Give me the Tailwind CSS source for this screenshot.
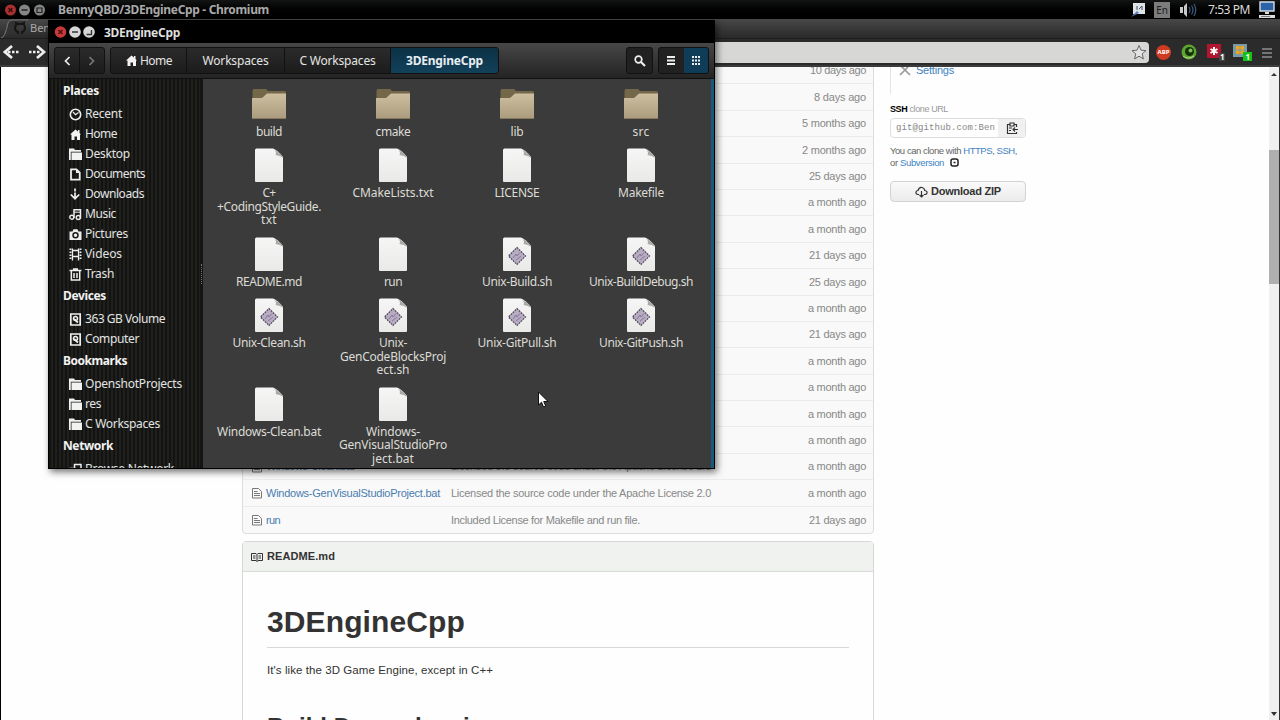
<!DOCTYPE html>
<html lang="en">
<head>
  <meta charset="UTF-8" />
  <meta name="viewport" content="width=device-width, initial-scale=1" />
  <title>BennyQBD/3DEngineCpp</title>
  <script src="https://cdn.jsdelivr.net/npm/@tailwindcss/browser@4"></script>
</head>
<body class="w-[1280px] h-[720px] overflow-hidden relative bg-[#fdfefd] font-['Noto_Sans','Open_Sans',sans-serif] whitespace-nowrap">

  <!-- icon sprites -->
  <svg class="absolute w-0 h-0">
    <symbol id="i-recent" viewBox="0 0 13 13"><circle cx="6.5" cy="6.5" r="5.2" fill="none" stroke="#eee" stroke-width="1.6"/><path d="M4 4l2.5 2.7L9.5 4.5" fill="none" stroke="#eee" stroke-width="1.2"/></symbol>
    <symbol id="i-home" viewBox="0 0 13 13"><path d="M6.5 1.5L1 6.5h1.5V12h3V8.5h2.5V12h3V6.5H12L10.5 5V2H9v1.5z" fill="#f2f2f2"/></symbol>
    <symbol id="i-folder" viewBox="0 0 13 13"><path d="M0 0.500h5l1 1.500h6v1.800H1.800V12H0zM2.500 4.500H13V12H2.500z" fill="#f2f2f2"/></symbol>
    <symbol id="i-doc" viewBox="0 0 13 13"><path d="M2 1.300h5.500l3.200 3.200v7.200H2z" fill="none" stroke="#eee" stroke-width="1.8"/><path d="M7 1v4h4z" fill="#eee"/></symbol>
    <symbol id="i-down" viewBox="0 0 13 13"><path d="M6 0.500v3M6 4.500v6M1.800 6.500L6 10.700l4.200-4.200" fill="none" stroke="#eee" stroke-width="1.7"/></symbol>
    <symbol id="i-music" viewBox="0 0 13 13"><path d="M5 10V1.800h6.500v9" fill="none" stroke="#eee" stroke-width="1.5"/><path d="M5 4.200h6.500" stroke="#eee"/><circle cx="2.800" cy="9.200" r="2" fill="none" stroke="#eee" stroke-width="1.4"/><circle cx="9.300" cy="9.500" r="2" fill="none" stroke="#eee" stroke-width="1.4"/></symbol>
    <symbol id="i-camera" viewBox="0 0 13 13"><path d="M0.500 3.500h3l1-2.300h4l1 2.300h3v8.500h-12z" fill="#eee"/><circle cx="6.500" cy="7.200" r="2.5" fill="#eee" stroke="#1a1a1a" stroke-width="1.5"/></symbol>
    <symbol id="i-video" viewBox="0 0 13 13"><path d="M3.500 0.500v12M9.500 0.500v12M3.500 2.500h6M3.500 8.500h6" stroke="#eee" stroke-width="1.300"/><path d="M1.500 0.500v12M11.500 0.500v12" stroke="#eee" stroke-width="2" stroke-dasharray="1.500 1.500"/></symbol>
    <symbol id="i-trash" viewBox="0 0 13 13"><path d="M0.500 2.500h12M4 1h5M2.300 3v9h8.400V3M5 5v5M8 5v5" fill="none" stroke="#eee" stroke-width="1.500"/></symbol>
    <symbol id="i-disk" viewBox="0 0 13 13"><path d="M1.800 1h9.400v11H1.800z" fill="none" stroke="#eee" stroke-width="1.700"/><circle cx="6.500" cy="5.500" r="2" fill="none" stroke="#eee" stroke-width="1.500"/><path d="M5 6l4 3.500" stroke="#eee" stroke-width="1.700"/></symbol>
    <symbol id="i-net" viewBox="0 0 13 13"><path d="M5.500 1.500h6.500v5.500h-6.500zM1 5.500h5v4.500H1z" fill="#1a1a1a" stroke="#eee" stroke-width="1.500"/></symbol>
    <linearGradient id="gf" x1="0" y1="0" x2="0" y2="1"><stop offset="0" stop-color="#cdbf9f"/><stop offset="1" stop-color="#ab9b7e"/></linearGradient>
    <linearGradient id="gp" x1="0" y1="0" x2="0" y2="1"><stop offset="0" stop-color="#f6f6f6"/><stop offset="1" stop-color="#e9e9e7"/></linearGradient>
    <symbol id="f-dir" viewBox="0 0 36 34"><path d="M1.500 3.500q0-1.500 1.500-1.500H15l2 2h16.500q1.500 0 1.500 1.500V14H1.500z" fill="#75684a"/><path d="M1 11h10l5-4.500H35v24.500q0 1-1 1H2q-1 0-1-1z" fill="url(#gf)"/><path d="M1.500 31.500h33" stroke="#85775a"/></symbol>
    <symbol id="f-file" viewBox="0 0 36 34"><path d="M5.500 0.500H22q4 1 10 8.500V33q0 1-1 1H5q-1 0-1-1V2q0-1.500 1.500-1.500z" fill="url(#gp)"/><path d="M23 1.500q3 2.500 1.500 5.500 5 .5 7.500 3-1-4-9-8.500z" fill="#a9aaa5"/></symbol>
    <symbol id="f-sh" viewBox="0 0 36 34"><use href="#f-file"/><path d="M18 10.500l8.500 8.500L18 27.500 9.500 19z" fill="#b8acc3" stroke="#4d4458" stroke-width="1.200" stroke-dasharray="1.800 1"/><path d="M14 21l3-4 1 2 3-3.500M17 23l5-4" stroke="#85789a" fill="none"/></symbol>
    <symbol id="i-text" viewBox="0 0 12 12"><path d="M1.500 1.500h6l3 3v6.500h-9z" fill="none" stroke="#777" /><path d="M3 4.500h3.500M3 6.500h6M3 8.500h6" stroke="#777"/></symbol>
  </svg>

  <!-- panel -->
  <header class="h-[19px] flex items-center bg-linear-to-b from-[#131414] to-black pl-1 pr-[3px]">
    <svg class="w-[42px] h-[14px]" viewBox="0 0 42 14">
      <circle cx="6.500" cy="7" r="5.500" fill="#a83030"/><path d="M4.500 5l4 4M8.500 5l-4 4" stroke="#3a0c0c" stroke-width="1.400"/>
      <circle cx="20.500" cy="7" r="5.500" fill="#858585"/><path d="M17.500 7h6" stroke="#222" stroke-width="1.500"/>
      <circle cx="35.500" cy="7" r="5.500" fill="#858585"/><path d="M33 5h5v4.500h-5z" fill="none" stroke="#222" stroke-width="1.200"/>
    </svg>
    <span class="ml-[12px] text-[12px] font-bold text-[#a9a9a9]" data-w="211">BennyQBD/3DEngineCpp - Chromium</span>
    <div class="ml-auto flex items-center">
      <svg class="-ml-1 w-4 h-4" viewBox="0 0 16 16"><path d="M3 1h12v11H3z" fill="#dfe3e8"/><path d="M1 15l6-6 2 2-4 2z" fill="#5b82b8"/><path d="M7 4v4M9 7l3-3v4" stroke="#456" fill="none"/></svg>
      <span class="ml-[8px] w-4 h-4 bg-[#7c7c7c] text-[#1b1b1b] text-[10px] leading-4 text-center">En</span>
      <svg class="ml-[9px] w-[18px] h-4" viewBox="0 0 18 16"><path d="M1 5h3v6H1zM5 4l3-3v14l-3-3z" fill="#c9c9c9"/><path d="M10 5q2 3 0 6M12.500 3.500q3 4.500 0 9M15 2q3.500 6 0 12" fill="none" stroke="#3b5878" stroke-width="1.300"/></svg>
      <span class="ml-[11px] text-[12px] text-[#dcdcdc]" data-w="42">7:53 PM</span>
      <svg class="ml-[9px] mr-[2px] w-4 h-[18px]" viewBox="0 0 16 18"><path d="M1 1h14v9H1z" fill="#2c63a6" stroke="#d5dde5" stroke-width="1.400"/><path d="M6 11h4v2H6zM0 14h16v3H0z" fill="#d9ddd9"/><path d="M2 15.500h9" stroke="#777"/></svg>
    </div>
  </header>

  <!-- browser tab strip and toolbar -->
  <div class="h-[20px] bg-linear-to-b from-[#484848] to-[#2a2a2a] border-b border-[#1f1f1f] flex items-center">
    <svg class="w-7 h-[19px]" viewBox="0 0 28 19"><path d="M1 19Q5 19 8 4q1-3 4-3h16" fill="#333" stroke="#777"/><path d="M18 15v-2q-3-1-3-4 0-2 1-3V4l2 1h4l2-1v2q1 1 1 3 0 3-3 4v2" fill="none" stroke="#161616" stroke-width="2"/></svg>
    <span class="ml-[2px] w-[18px] overflow-hidden text-[11px] text-[#aaa]">Ben</span>
  </div>
  <div class="h-7 flex items-center bg-[#2b2b2b] border-b-2 border-[#3c3c3c] pl-[3px] pr-[6px]">
    <svg class="w-[44px] h-[16px]" viewBox="0 0 44 16"><path d="M9 2L2 8l7 6M34 2l7 6-7 6" fill="none" stroke="#eee" stroke-width="2.800"/><path d="M5 8h12M26 8h12" stroke="#eee" stroke-width="2.500" stroke-dasharray="2.500 1.500"/></svg>
    <div class="ml-[20px] flex-1 h-[21px] rounded-r bg-[#d7d8d6] flex items-center justify-end pr-[2px]">
      <svg class="w-4 h-4" viewBox="0 0 16 16"><path d="M8 1.500l2 4.700 5 .4-3.800 3.300 1.200 5L8 12.200 3.600 14.900l1.200-5L1 6.600l5-.4z" fill="#e4e4e4" stroke="#666"/></svg>
    </div>
    <div class="ml-[7px] w-[15px] h-[15px] rounded-full bg-[#cf3a22] text-[6px] font-bold text-white text-center leading-[15px]">ABP</div>
    <svg class="ml-[10px] w-4 h-4" viewBox="0 0 16 16"><circle cx="8" cy="8" r="7.500" fill="#5fa331"/><circle cx="8.500" cy="7.500" r="4.500" fill="#143209"/><circle cx="9.500" cy="6.500" r="2" fill="#7ebd55"/><path d="M2 12q5 4 11 0" stroke="#b6dc8f" fill="none"/></svg>
    <svg class="ml-[10px] w-[18px] h-[18px]" viewBox="0 0 18 18"><path d="M0 1h14v14H0z" fill="#b3152f"/><path d="M7 4v8M3.500 6l7 4M10.500 6l-7 4" stroke="#fff" stroke-width="2"/><path d="M12 10h6v8h-6z" fill="#444"/><text x="13" y="17" font-size="8" font-weight="bold" fill="#fff">1</text></svg>
    <svg class="ml-[8px] w-[19px] h-[18px]" viewBox="0 0 19 18"><path d="M0 1h14v13H0z" fill="#7a9ba6"/><path d="M3 3h3.500v3.500H3zM7.500 3H11v3.500H7.500zM3 7.500h3.500V11H3zM7.500 7.500H11V11H7.500z" fill="#efa51c"/><path d="M10 9h9v9h-9z" fill="#14c414"/><text x="12.500" y="16.500" font-size="8" font-weight="bold" fill="#fff">1</text></svg>
    <svg class="ml-[8px] w-[14px] h-[18px]" viewBox="0 0 14 18"><path d="M2 6h10M2 10h10M2 14h10" stroke="#8e8e8e" stroke-width="1.500"/></svg>
  </div>

  <!-- web page -->
  <main class="h-[653px] overflow-hidden flex border-l border-black pl-[241px] font-['Liberation_Sans',sans-serif] text-[11px]">
    <div class="w-[632px] shrink-0">
      <div id="files" class="-mt-[10px] border border-[#ddd] rounded-b bg-[#f8f9f8] text-[#888]"></div>
      <section class="mt-[7px] h-[300px] border border-[#d5d8d5] rounded-t">
        <h3 class="h-[30px] flex items-center bg-[#f0f2f0] border-b border-[#d8dad8] pl-[8px] text-[11px] font-bold text-[#333]">
          <svg class="w-3 h-3 mr-[4px]" viewBox="0 0 12 12"><path d="M0.500 2.500H5l1 1 1-1h4.500v7H7l-1 1-1-1H0.500zM6 3.500v7M2 5h2.500M2 7h2.500M7.500 5H10M7.500 7H10" fill="none" stroke="#333"/></svg>
          <span data-w="68">README.md</span>
        </h3>
        <div class="px-6 pt-[32px] text-[#333]">
          <h1 class="h-[44px] leading-9 border-b border-[#d8d8d8] text-[30px] font-bold"><span data-w="198">3DEngineCpp</span></h1>
          <p class="mt-[14px] leading-4 text-[11.500px]"><span data-w="226">It's like the 3D Game Engine, except in C++</span></p>
          <h2 class="mt-[34px] leading-[30px] text-[24px] font-bold">Build Dependencies</h2>
        </div>
      </section>
    </div>

    <aside class="ml-4 w-[136px] text-[#666]">
      <div class="h-[27px] border-l border-[#e5e5e5] pl-[8px] flex gap-[5px]">
        <svg class="mt-[-3px] w-3 h-3" viewBox="0 0 12 12"><path d="M1 11L9 3M2 2l9 9" stroke="#999" stroke-width="1.700"/></svg>
        <span class="-mt-[5px] leading-4 text-[#4183c4] text-[11px]" data-w="38">Settings</span>
      </div>
      <p class="mt-[9px] leading-3 text-[9px] text-[#999]"><span data-w="58"><b class="text-black">SSH</b> clone URL</span></p>
      <div class="mt-[3px] h-[20px] flex border border-[#ddd] rounded-sm overflow-hidden">
        <span class="w-[107px] pl-[5px] leading-[18px] font-['Liberation_Mono',monospace] text-[9px] text-[#888] overflow-hidden"><span data-w="99">git@github.com:Ben</span></span>
        <span class="flex-1 bg-[#f0f0f0] flex items-center justify-center">
          <svg class="w-3 h-3" viewBox="0 0 12 12"><path d="M4 2.500H1.500v9h9V10M8 2.500h2.500V5M4 1h4v3H4zM3 6h3M3 8.500h2M12 7.500H7M9 5.500l-2 2 2 2" fill="none" stroke="#333" stroke-width="1.200"/></svg>
        </span>
      </div>
      <p class="mt-[7px] leading-3 text-[9.500px]"><span data-w="127">You can clone with <span class="text-[#4183c4]">HTTPS</span>, <span class="text-[#4183c4]">SSH</span>,</span></p>
      <p class="leading-3 text-[9.500px] flex items-center"><span data-w="54">or <span class="text-[#4183c4]">Subversion</span></span>
        <svg class="ml-[6px] -mt-[2px] w-[9px] h-[9px]" viewBox="0 0 9 9"><rect x="1" y="1" width="7" height="7" rx="2" fill="none" stroke="#222" stroke-width="1.500"/><path d="M3.500 4.500h2" stroke="#222" stroke-width="1.500"/></svg>
      </p>
      <div class="mt-[12px] h-[21px] flex items-center justify-center gap-[3px] rounded-sm border border-[#d2d2d2] bg-linear-to-b from-[#fafafa] to-[#ebebeb] text-[11px] font-bold text-[#333]">
        <svg class="w-[13px] h-[12px]" viewBox="0 0 13 12"><path d="M4 8.500H3Q0.500 8 1 6q.5-1.500 2-1.500Q4 1 7 1.500q2.500.5 2.700 3Q12.500 5 12 7q-.5 1.500-2 1.500H9M6.500 5v6M4.500 9l2 2 2-2" fill="none" stroke="#333" stroke-width="1.200"/></svg>
        <span data-w="70">Download ZIP</span>
      </div>
    </aside>

    <div class="ml-auto w-[11px] h-full bg-[#eff0ef] border-r border-[#333] flex flex-col">
      <svg class="w-[10px] h-[16px]" viewBox="0 0 10 16"><path d="M2 9l3-3 3 3z" fill="#333"/></svg>
      <div class="mt-[67px] h-[134px] bg-[#afafaf]"></div>
      <svg class="mt-auto w-[10px] h-[12px]" viewBox="0 0 10 12"><path d="M2 4h6L5 8z" fill="#333"/></svg>
    </div>
  </main>

  <!-- file manager window -->
  <div class="absolute left-[48px] top-[20px] w-[667px] h-[449px] flex flex-col bg-black border border-black shadow-[2px_3px_7px_rgba(0,0,0,0.55)] text-[12px] text-[#e4e4e4]">
    <div class="h-[22px] shrink-0 flex items-center pl-[5px]">
      <svg class="w-[42px] h-[14px]" viewBox="0 0 42 14">
        <circle cx="6.500" cy="7" r="5.800" fill="#c73a3c"/><path d="M4.500 5l4 4M8.500 5l-4 4" stroke="#4d0c0c" stroke-width="1.400"/>
        <circle cx="21" cy="7" r="5.800" fill="#d6d6d6"/><path d="M18 7h6" stroke="#333" stroke-width="1.500"/>
        <circle cx="35" cy="7" r="5.800" fill="#d6d6d6"/><path d="M32.500 9.500h5V5" fill="none" stroke="#333" stroke-width="1.400"/>
      </svg>
      <span class="ml-[8px] mt-[2px] text-[12px] font-bold text-[#dedede]" data-w="76">3DEngineCpp</span>
    </div>

    <div class="h-[35px] shrink-0 flex items-center pl-[5px] pr-[5px] bg-linear-to-b from-[#474747] to-[#242424]">
      <div class="w-[51px] h-[27px] flex rounded-[3px] border border-[#111] bg-linear-to-b from-[#2b2b2b] to-[#1c1c1c]">
        <span class="flex-1 border-r border-[#111] flex items-center justify-center"><svg class="w-2 h-3" viewBox="0 0 8 12"><path d="M6.500 2l-4 4 4 4" fill="none" stroke="#eee" stroke-width="1.700"/></svg></span>
        <span class="flex-1 flex items-center justify-center"><svg class="w-2 h-3" viewBox="0 0 8 12"><path d="M1.500 2l4 4-4 4" fill="none" stroke="#777" stroke-width="1.700"/></svg></span>
      </div>
      <div class="ml-[5px] w-[389px] h-[27px] flex rounded-[3px] border border-[#111] bg-linear-to-b from-[#2b2b2b] to-[#1c1c1c] overflow-hidden">
        <span class="w-[76px] border-r border-[#111] flex items-center justify-center gap-[2px]"><svg class="w-[13px] h-[13px]"><use href="#i-home"/></svg><span data-w="32">Home</span></span>
        <span class="w-[98px] border-r border-[#111] flex items-center justify-center"><span data-w="66">Workspaces</span></span>
        <span class="w-[106px] border-r border-[#111] flex items-center justify-center"><span data-w="76">C Workspaces</span></span>
        <span class="flex-1 flex items-center justify-center bg-linear-to-b from-[#0c3145] to-[#12415a] font-bold text-[12px] text-[#e8eef2]"><span data-w="77">3DEngineCpp</span></span>
      </div>
      <div class="ml-auto w-[27px] h-[27px] flex items-center justify-center rounded-[3px] border border-[#111] bg-[#212121]">
        <svg class="w-3 h-3" viewBox="0 0 12 12"><circle cx="4.500" cy="4.500" r="3.300" fill="none" stroke="#eee" stroke-width="1.700"/><path d="M7 7l4 4" stroke="#eee" stroke-width="2.200"/></svg>
      </div>
      <div class="ml-[5px] w-[51px] h-[27px] flex rounded-[3px] border border-[#111] bg-[#212121] overflow-hidden">
        <span class="flex-1 flex items-center justify-center"><svg class="w-2 h-[9px]" viewBox="0 0 8 9"><path d="M0 1h8M0 4.500h8M0 8h8" stroke="#eee" stroke-width="1.800"/></svg></span>
        <span class="flex-1 flex items-center justify-center bg-[#0f3c57]"><svg class="w-2 h-[9px]" viewBox="0 0 8 9"><path d="M0 1h8M0 4.500h8M0 8h8" stroke="#eee" stroke-width="2" stroke-dasharray="2 1"/></svg></span>
      </div>
    </div>

    <div class="flex-1 min-h-0 flex border-t border-[#111]">
      <nav id="places" class="w-[154px] shrink-0 overflow-hidden border-r-[3px] border-[#151515] bg-[repeating-linear-gradient(90deg,#131412_0_2px,#1f201d_2px_4px)]"></nav>
      <div class="flex-1 min-w-0 bg-[#3b3b3b] border-r-[3px] border-[#135a7c] overflow-hidden">
        <div id="icons" class="w-[496px] ml-[4px] pt-[7.5px] grid grid-cols-[repeat(4,124px)] text-[#dcdcd6] text-[12px]"></div>
      </div>
    </div>
    <!-- pane drag handle -->
    <div class="absolute left-[152px] top-[243px] h-[20px] border-l border-dotted border-[#777]"></div>
  </div>

  <!-- mouse pointer -->
  <svg class="absolute left-[537px] top-[391px] w-[12px] h-[18px]" viewBox="0 0 12 18"><path d="M1.500 1v13l3-2.800 2 4.800 2.200-1-2-4.500H11z" fill="#fff" stroke="#111"/></svg>

  <script>
    const places = [
      ["Places"],
      ["Recent", "recent", 37], ["Home", "home", 32], ["Desktop", "folder", 45], ["Documents", "doc", 60],
      ["Downloads", "down", 59], ["Music", "music", 31], ["Pictures", "camera", 43], ["Videos", "video", 37], ["Trash", "trash", 29],
      ["Devices"],
      ["363 GB Volume", "disk", 80], ["Computer", "disk", 54],
      ["Bookmarks"],
      ["OpenshotProjects", "folder", 97], ["res", "folder", 16], ["C Workspaces", "folder", 75],
      ["Network"],
      ["Browse Network", "net", 89]
    ];
    const headWidths = { Places: 36, Devices: 43, Bookmarks: 64, Network: 50 };

    document.getElementById("places").innerHTML = places.map(([name, icon, w]) => icon
      ? `<div class="h-[20px] pl-[20px] flex items-center gap-[3px]"><svg class="w-[13px] h-[13px]"><use href="#i-${icon}"/></svg><span data-w="${w}">${name}</span></div>`
      : `<div class="h-[25px] pl-[14px] pb-px flex items-center text-[12px] font-bold text-[#f2f2f2]"><span data-w="${headWidths[name]}">${name}</span></div>`
    ).join("");

    // [icon, [line, width], ...]
    const icons = [
      ["dir", ["build", 26]], ["dir", ["cmake", 35]], ["dir", ["lib", 13]], ["dir", ["src", 17]],
      ["file", ["C+", 13], ["+CodingStyleGuide.", 104], ["txt", 16]], ["file", ["CMakeLists.txt", 81]], ["file", ["LICENSE", 45]], ["file", ["Makefile", 46]],
      ["file", ["README.md", 66]], ["file", ["run", 18]], ["sh", ["Unix-Build.sh", 70]], ["sh", ["Unix-BuildDebug.sh", 104]],
      ["sh", ["Unix-Clean.sh", 73]], ["sh", ["Unix-", 28], ["GenCodeBlocksProj", 106], ["ect.sh", 33]], ["sh", ["Unix-GitPull.sh", 79]], ["sh", ["Unix-GitPush.sh", 84]],
      ["file", ["Windows-Clean.bat", 104]], ["file", ["Windows-", 54], ["GenVisualStudioPro", 108], ["ject.bat", 42]]
    ];

    document.getElementById("icons").innerHTML = icons.map(([kind, ...lines]) => `
      <div class="flex flex-col items-center pb-[10px]">
        <svg class="w-[36px] h-[34px] mb-[4px]"><use href="#f-${kind}"/></svg>
        ${lines.map(([t, w]) => `<div class="leading-[13.5px]"><span data-w="${w}">${t}</span></div>`).join("")}
      </div>`).join("");

    const month = ["a month ago", 58];
    const rows = [
      [["10 days ago", 56]], [["8 days ago", 52]], [["5 months ago", 64]], [["2 months ago", 64]], [["25 days ago", 57]],
      [month], [month], [["21 days ago", 57]], [["25 days ago", 57]], [month], [["21 days ago", 57]],
      [month], [month], [month], [month],
      [month, ["Windows-Clean.bat", 88], ["Licensed the source code under the Apache License 2.0", 260]],
      [month, ["Windows-GenVisualStudioProject.bat", 174], ["Licensed the source code under the Apache License 2.0", 260]],
      [["21 days ago", 57], ["run", 14], ["Included License for Makefile and run file.", 189]]
    ];

    document.getElementById("files").innerHTML = rows.map(([age, file, msg]) => `
      <div class="h-[26.4px] flex items-center border-b border-[#ececec] last:border-b-0 pl-[8px] pr-[7px]">
        ${file ? `<svg class="w-3 h-3"><use href="#i-text"/></svg>
        <span class="w-[185px] ml-[3px] text-[#4a7cb0]"><span data-w="${file[1]}">${file[0]}</span></span>
        <span data-w="${msg[1]}">${msg[0]}</span>` : ""}
        <span class="ml-auto" data-w="${age[1]}">${age[0]}</span>
      </div>`).join("");

    // spread the letters of each label over its width
    function fitLabels() {
      document.querySelectorAll("[data-w]").forEach(el => {
        el.style.letterSpacing = "0px";
        const gap = (el.dataset.w - el.getBoundingClientRect().width) / el.textContent.length;
        el.style.letterSpacing = gap.toFixed(3) + "px";
      });
    }
    fitLabels();
    window.addEventListener("load", () => {
      fitLabels();
      requestAnimationFrame(fitLabels);
      document.fonts.ready.then(fitLabels);
    });
  </script>
</body>
</html>
